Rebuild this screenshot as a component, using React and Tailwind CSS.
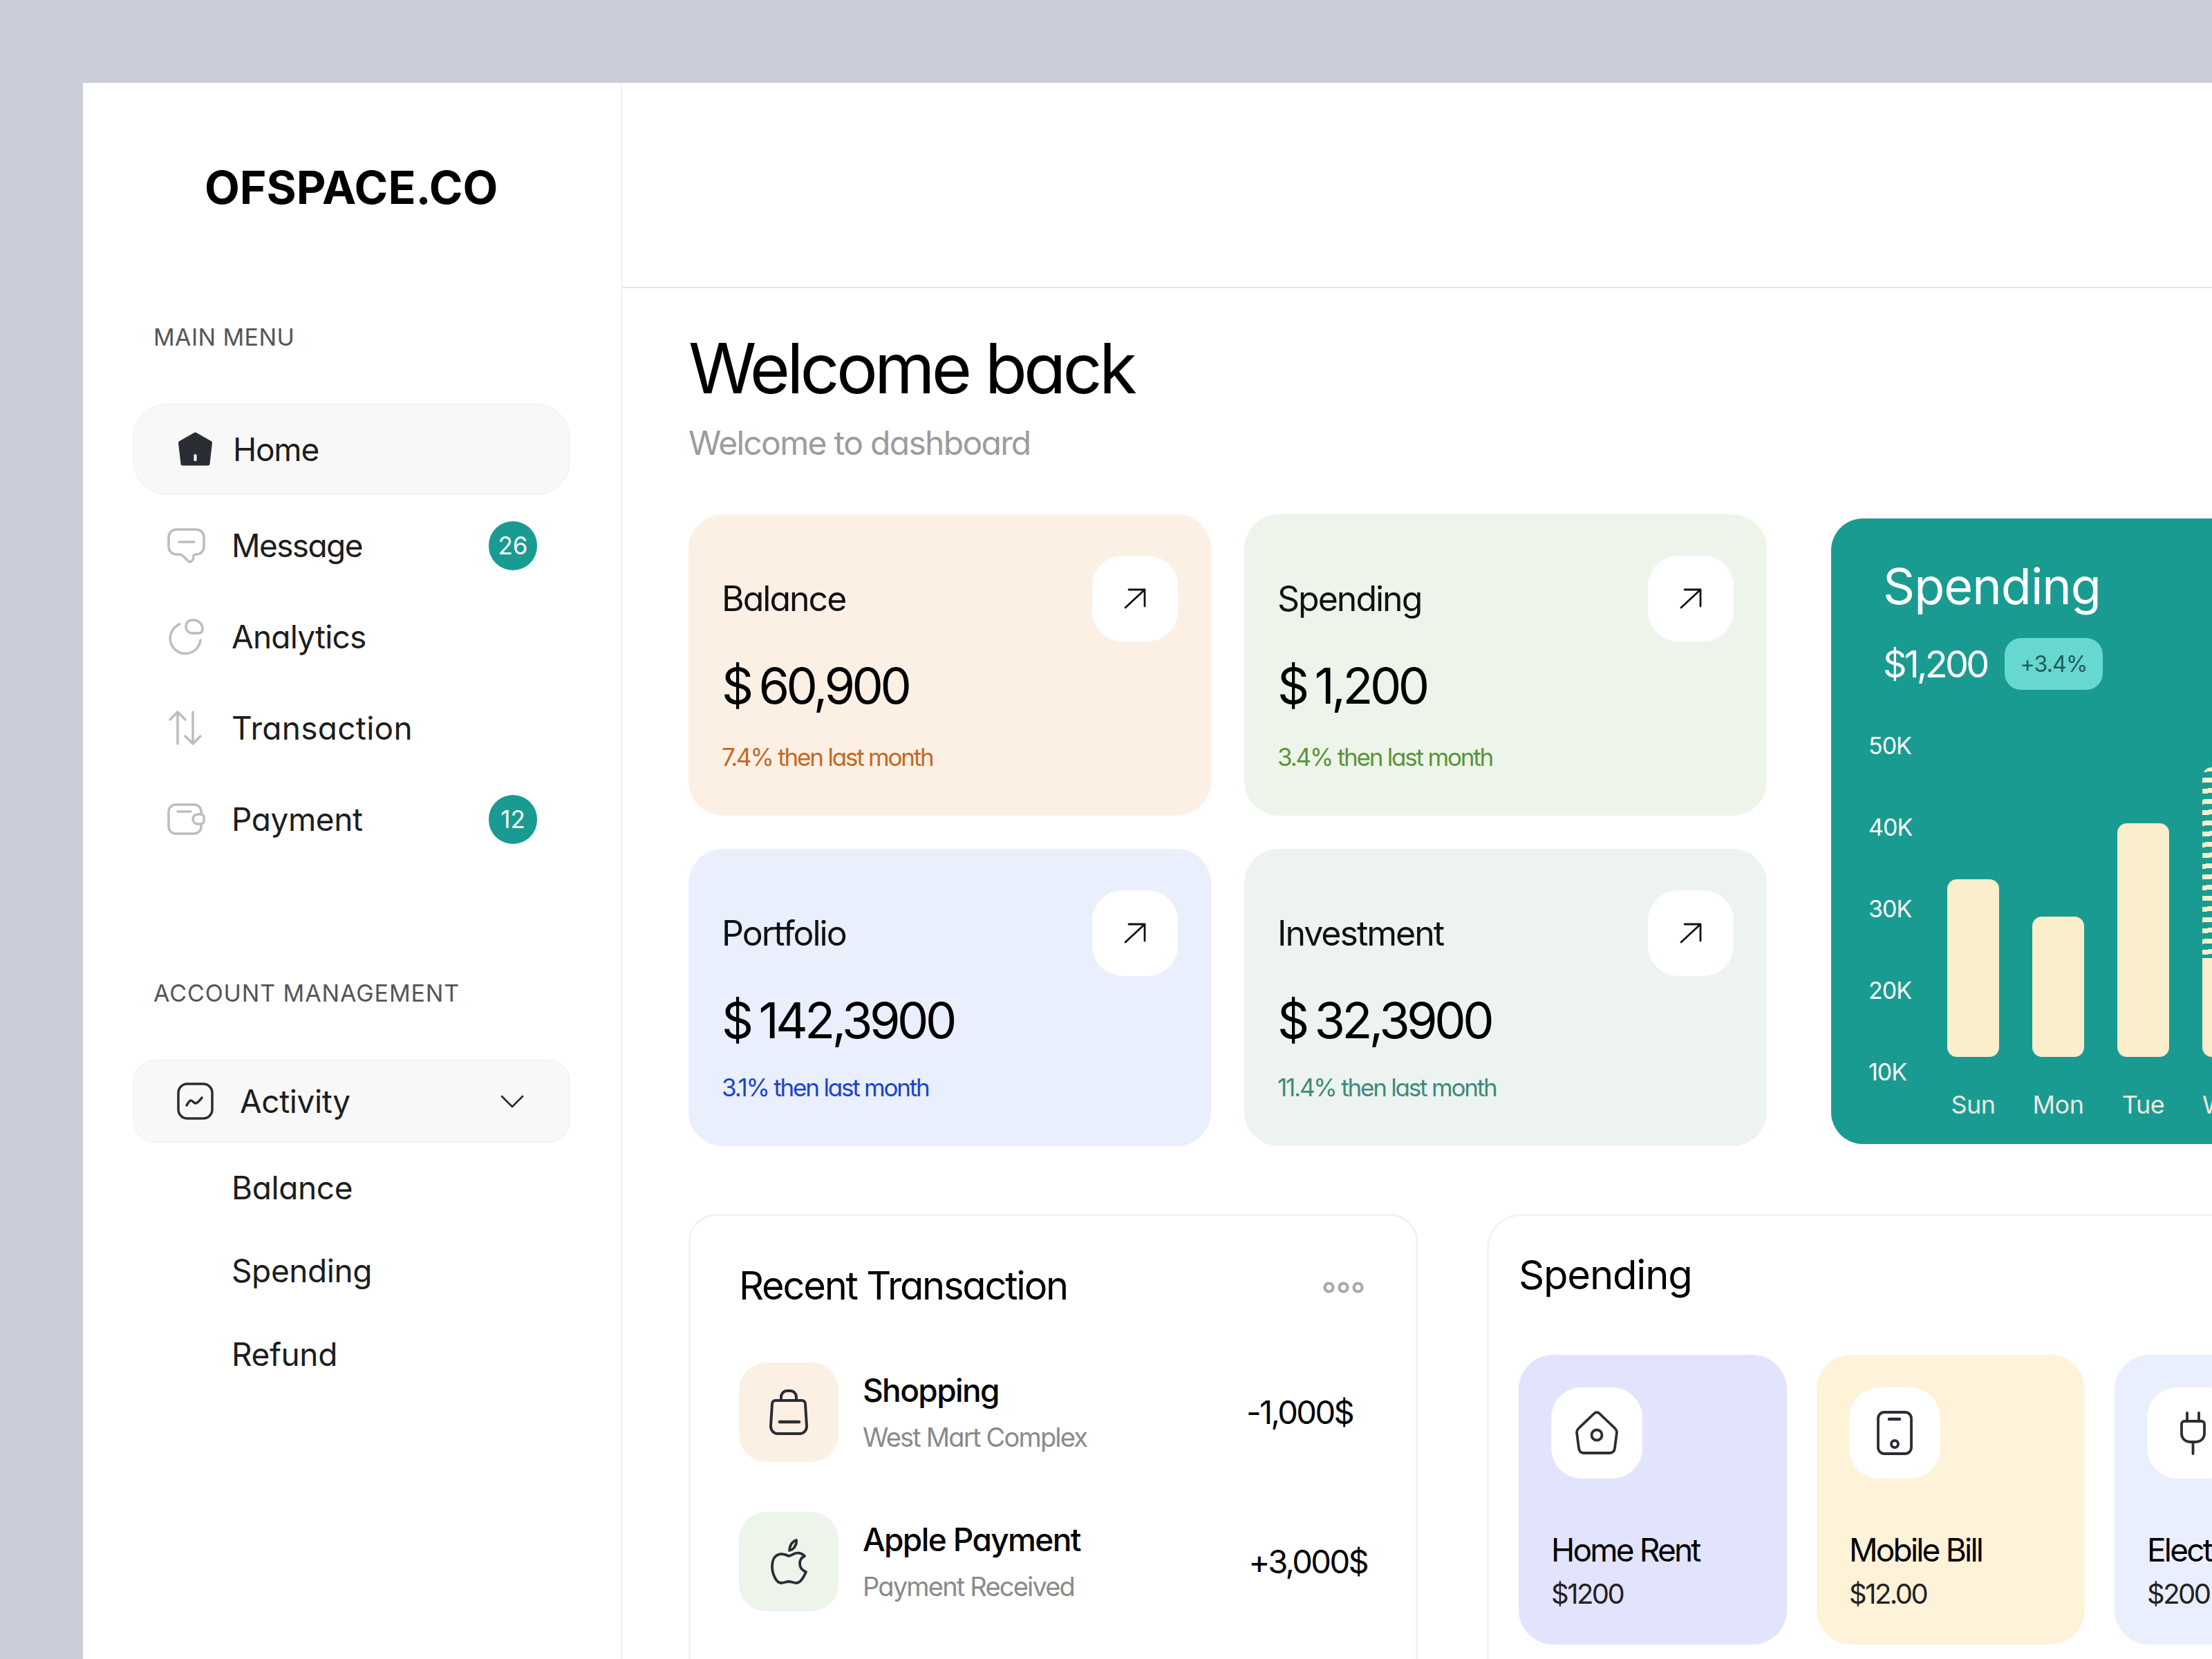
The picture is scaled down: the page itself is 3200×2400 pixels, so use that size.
const MUTED = '#bdbdbd';
const DARK = '#2a2d34';

function HomeIcon() {
  return (
    <svg width="51" height="50" viewBox="0 0 51 50" className="shrink-0">
      <path d="M25.500 3 47.500 15.500 44 46H7L3.500 15.500z" fill={DARK} stroke={DARK} strokeWidth="5" strokeLinejoin="round" />
      <rect x="23.500" y="32" width="4" height="10" rx="1.500" fill="#fff" />
    </svg>
  );
}

function MessageIcon() {
  return (
    <svg width="55" height="51" viewBox="0 0 55 51" fill="none" stroke={MUTED} strokeWidth="3.500" strokeLinecap="round" strokeLinejoin="round">
      <path d="M13 2h29a11 11 0 0 1 11 11v14a11 11 0 0 1-11 11h-1c-2 0-3 1-3 3 0 5-3 8-6 8-3-1-7-8-11-10-1-.7-2-1-4-1h-4A11 11 0 0 1 2 27V13A11 11 0 0 1 13 2z" />
      <path d="M17 20h22" />
    </svg>
  );
}

function AnalyticsIcon() {
  return (
    <svg width="53" height="53" viewBox="0 0 53 53" fill="none" stroke={MUTED} strokeWidth="3.500" strokeLinecap="round" strokeLinejoin="round">
      <path d="M18 8A22 22 0 1 0 48 31" />
      <path d="M27 11a9 9 0 0 1 9-9h2a13 13 0 0 1 13 13c0 4-2 6-6 6h-9a9 9 0 0 1-9-9z" />
    </svg>
  );
}

function TransferIcon() {
  return (
    <svg width="50" height="50" viewBox="0 0 50 50" fill="none" stroke={MUTED} strokeWidth="3.500" strokeLinecap="round" strokeLinejoin="round">
      <path d="M15 48V2M4 13 15 2l11 11" />
      <path d="M37 2v46M26 37l11 11 11-11" />
    </svg>
  );
}

function WalletIcon() {
  return (
    <svg width="55" height="46" viewBox="0 0 55 46" fill="none" stroke={MUTED} strokeWidth="3.500" strokeLinecap="round" strokeLinejoin="round">
      <path d="M49 16V12A10 10 0 0 0 39 2H12A10 10 0 0 0 2 12v22a10 10 0 0 0 10 10h27a10 10 0 0 0 10-10v-4" />
      <path d="M44 16h5a4 4 0 0 1 4 4v6a4 4 0 0 1-4 4h-5a7 7 0 0 1 0-14z" />
      <path d="M15 12h19" />
    </svg>
  );
}

function ActivityIcon() {
  return (
    <svg width="53" height="54" viewBox="0 0 53 54" fill="none" stroke={DARK} strokeWidth="3.500" strokeLinecap="round" strokeLinejoin="round" className="shrink-0">
      <rect x="2" y="2" width="49" height="50" rx="13" />
      <path d="M14 33c2-3 4-7 6-7 3 0 4 4 7 4 3 0 6-4 9-8" />
    </svg>
  );
}

function Chevron() {
  return (
    <svg width="34" height="19" viewBox="0 0 34 19" fill="none" stroke={DARK} strokeWidth="2.800" strokeLinecap="round" strokeLinejoin="round">
      <path d="M2 2 17 17 32 2" />
    </svg>
  );
}

function ArrowUpRight() {
  return (
    <svg width="32" height="30" viewBox="0 0 32 30" fill="none" stroke="#111" strokeWidth="2.800" strokeLinecap="round" strokeLinejoin="round">
      <path d="M2 28 30 2M7 2h23v24" />
    </svg>
  );
}

function BagIcon() {
  return (
    <svg width="56" height="66" viewBox="0 0 56 66" fill="none" stroke={DARK} strokeWidth="4" strokeLinecap="round" strokeLinejoin="round">
      <path d="M9 16h38c3 0 5 2 5 5l2 32c0 6-4 11-10 11H12C6 64 2 59 2 53l2-32c0-3 2-5 5-5z" />
      <path d="M17 16V11a9 9 0 0 1 9-9h4a9 9 0 0 1 9 9v5" />
      <path d="M15 47h28" strokeWidth="4.500" />
    </svg>
  );
}

function AppleIcon() {
  return (
    <svg width="53" height="66" viewBox="0 0 53 66" fill="none" stroke={DARK} strokeWidth="3.800" strokeLinecap="round" strokeLinejoin="round">
      <path d="M37 2c-6 2-10 8-10 15 6-1 11-8 10-15z" />
      <path d="M26 25c-4-2-10-4-15-2C5 25 2 32 2 40c0 11 6 24 13 24 4 0 7-2 11-2s7 2 11 2c6 0 11-9 14-16-5-2-9-6-9-12 0-5 3-9 7-11-4-4-9-5-13-4-4 1-7 4-10 4z" />
    </svg>
  );
}

function PentagonIcon() {
  return (
    <svg width="64" height="64" viewBox="0 0 64 64" fill="none" stroke={DARK} strokeWidth="3.800" strokeLinecap="round" strokeLinejoin="round">
      <path d="M28 4a5.500 5.500 0 0 1 8 0l22 21c1.500 1.500 3 3.500 3 6L58 54c-.5 4-3 7-7 7H13c-4 0-6.500-3-7-7L3 31c0-2.500 1.500-4.500 3-6z" />
      <circle cx="32" cy="35" r="7.500" />
    </svg>
  );
}

function PhoneIcon() {
  return (
    <svg width="52" height="64" viewBox="0 0 52 64" fill="none" stroke={DARK} strokeWidth="3.800" strokeLinecap="round" strokeLinejoin="round">
      <rect x="2" y="2" width="48" height="60" rx="9" />
      <path d="M18 12h15" strokeWidth="4.500" />
      <circle cx="26" cy="48" r="5" />
    </svg>
  );
}

function PlugIcon() {
  return (
    <svg width="37" height="63" viewBox="0 0 37 63" fill="none" stroke={DARK} strokeWidth="3.800" strokeLinecap="round" strokeLinejoin="round">
      <path d="M10 2v12M27 2v12" />
      <path d="M6 14h25a4 4 0 0 1 4 4v14a12 12 0 0 1-12 12h-9A12 12 0 0 1 2 32V18a4 4 0 0 1 4-4z" />
      <path d="M18.500 44v17" />
    </svg>
  );
}

function NavRow({ icon, label, badge, spacing }) {
  return (
    <div className="flex h-[132px] items-center pl-[50px] pr-[48px]">
      <div className="flex w-[93px] shrink-0 items-center">{icon}</div>
      <span className={`text-[46px] text-[#1c1d20] ${spacing}`}>{label}</span>
      {badge && (
        <span className="ml-auto flex h-[71px] w-[70px] items-center justify-center rounded-full bg-[#1a9b91] text-[35px] text-white">
          {badge}
        </span>
      )}
    </div>
  );
}

function StatCard({ label, value, note, noteColor, bg, rowGap }) {
  return (
    <div className={`rounded-[50px] pl-[48px] pr-[48px] ${bg}`}>
      <div className="flex items-center justify-between pt-[60px]">
        <span className="text-[50px] tracking-[-2px] text-[#111]">{label}</span>
        <div className="flex h-[124px] w-[124px] items-center justify-center rounded-[44px] bg-white">
          <ArrowUpRight />
        </div>
      </div>
      <div className="mt-[19px] h-[90px] text-[72px] leading-[90px] tracking-[-4.500px] text-black [word-spacing:-4px]">{value}</div>
      <div className={`h-[50px] text-[35px] leading-[50px] tracking-[-2.200px] ${noteColor} ${rowGap}`}>{note}</div>
    </div>
  );
}

function Bar({ label, height, hatched }) {
  return (
    <div className="flex w-[75px] shrink-0 flex-col items-center">
      <div className="flex h-[510px] w-full flex-col justify-end">
        {hatched && (
          <div className="h-[276px] w-full rounded-t-[14px] bg-[repeating-linear-gradient(176deg,#faeecb_0px,#faeecb_7px,transparent_7px,transparent_15.500px)]" />
        )}
        <div className={`w-full bg-[#faeecb] ${hatched ? 'rounded-b-[14px]' : 'rounded-[14px]'} ${height}`} />
      </div>
      <span className="mt-[47px] h-[44px] whitespace-nowrap text-[36px] leading-[44px] tracking-[-0.5px] text-[#ebe9e0]">{label}</span>
    </div>
  );
}

function Transaction({ icon, bg, title, sub, amount, amountMargin }) {
  return (
    <div className="flex h-[144px] items-center">
      <div className={`flex h-[144px] w-[144px] shrink-0 items-center justify-center rounded-[40px] ${bg}`}>{icon}</div>
      <div className="ml-[35px] flex h-[144px] flex-col">
        <span className="mt-[15px] h-[50px] text-[46px] font-medium leading-[50px] tracking-[-1.600px] text-black">{title}</span>
        <span className="mt-[18px] h-[50px] text-[38px] leading-[50px] tracking-[-1.800px] text-[#8a8a8a]">{sub}</span>
      </div>
      <span className={`ml-auto text-[47px] tracking-[-2.600px] text-black ${amountMargin}`}>{amount}</span>
    </div>
  );
}

function BillCard({ icon, bg, name, value }) {
  return (
    <div className={`h-[419px] w-[388px] shrink-0 rounded-[50px] pl-[47px] pt-[47px] ${bg}`}>
      <div className="flex h-[132px] w-[132px] items-center justify-center rounded-[44px] bg-white">{icon}</div>
      <div className="mt-[73px] h-[60px] whitespace-nowrap text-[46px] leading-[60px] tracking-[-2.800px] text-black">{name}</div>
      <div className="mt-[9px] h-[50px] text-[40px] leading-[50px] tracking-[-2.500px] text-[#222]">{value}</div>
    </div>
  );
}

export default function App() {
  return (
    <div className="h-[2400px] w-[3200px] overflow-hidden bg-[#c9ced9] pl-[120px] pt-[120px] font-['Inter',sans-serif] [font-feature-settings:'cv11']">
      <div className="flex h-[2280px] w-[3080px] bg-white">
        {/* Sidebar */}
        <aside className="w-[780px] shrink-0 border-r-2 border-[#f0f0f0]">
          <div className="flex h-[302px] items-center pl-[176px]">
            <span className="text-[66px] font-bold text-black [font-feature-settings:'cv11'_0]">OFSPACE.CO</span>
          </div>
          <div className="ml-[102px] mt-[44px] h-[44px] text-[34px] leading-[44px] tracking-[0.400px] text-[#555]">MAIN MENU</div>
          <div className="ml-[72px] mt-[74px] w-[633px]">
            <div className="flex h-[132px] items-center rounded-[50px] border-2 border-[#f3f3f3] bg-[#f8f8f8] pl-[63px]">
              <div className="w-[80px] shrink-0"><HomeIcon /></div>
              <span className="text-[46px] tracking-[-1.200px] text-[#1c1d20]">Home</span>
            </div>
            <div className="mt-[7px]">
              <NavRow icon={<MessageIcon />} label="Message" badge="26" spacing="tracking-[-1.600px]" />
              <NavRow icon={<AnalyticsIcon />} label="Analytics" spacing="tracking-[-0.800px]" />
              <NavRow icon={<TransferIcon />} label="Transaction" spacing="tracking-[0.300px]" />
              <NavRow icon={<WalletIcon />} label="Payment" badge="12" spacing="tracking-[-0.400px]" />
            </div>
          </div>
          <div className="ml-[102px] mt-[164px] h-[44px] text-[34px] leading-[44px] tracking-[0.900px] text-[#555]">ACCOUNT MANAGEMENT</div>
          <div className="ml-[72px] mt-[74px] w-[633px]">
            <div className="flex h-[120px] items-center rounded-[32px] border-2 border-[#f3f3f3] bg-[#f8f8f8] pl-[62px] pr-[65px]">
              <ActivityIcon />
              <span className="ml-[38px] text-[46px] tracking-[-0.4px] text-[#1c1d20]">Activity</span>
              <span className="ml-auto"><Chevron /></span>
            </div>
            <div className="mt-[5px] pl-[143px] text-[46px] tracking-[-0.4px] text-[#1c1d20]">
              <div className="flex h-[120.500px] items-center">Balance</div>
              <div className="flex h-[120.500px] items-center">Spending</div>
              <div className="flex h-[120.500px] items-center">Refund</div>
            </div>
          </div>
        </aside>

        {/* Main */}
        <main className="min-w-0 flex-1">
          <div className="h-[297px] border-b-2 border-[#e5e5e5]" />
          <div className="pl-[96px]">
            <h1 className="mt-[56px] h-[120px] text-[100px] leading-[120px] tracking-[-4.800px] text-black">Welcome back</h1>
            <p className="mt-[18px] h-[60px] text-[48px] leading-[60px] tracking-[-1.7px] text-[#9c9c9c]">Welcome to dashboard</p>

            <div className="mt-[73px] flex w-[2400px] gap-[93px]">
              <div className="grid w-[1560px] shrink-0 grid-cols-[756px_756px] grid-rows-[436px_430px] gap-[48px]">
                <StatCard label="Balance" value="$ 60,900" note="7.4% then last month" noteColor="text-[#c26a1f]" bg="bg-[#fcf0e5]" rowGap="mt-[33px]" />
                <StatCard label="Spending" value="$ 1,200" note="3.4% then last month" noteColor="text-[#5b9437]" bg="bg-[#edf4ea]" rowGap="mt-[33px]" />
                <StatCard label="Portfolio" value="$ 142,3900" note="3.1% then last month" noteColor="text-[#1a43cc]" bg="bg-[#e9effc]" rowGap="mt-[27px]" />
                <StatCard label="Investment" value="$ 32,3900" note="11.4% then last month" noteColor="text-[#3d8a7d]" bg="bg-[#ecf3f0]" rowGap="mt-[27px]" />
              </div>

              <div className="mt-[6px] h-[905px] w-[800px] shrink-0 rounded-l-[46px] bg-[#1a9b91] pl-[54px] pt-[53px]">
                <div className="ml-[21px] h-[90px] text-[72px] leading-[90px] tracking-[-1px] text-white">Spending</div>
                <div className="ml-[21px] mt-[30px] flex h-[75px] items-center">
                  <span className="w-[176px] shrink-0 text-[54px] tracking-[-3.800px] text-white">$1,200</span>
                  <span className="flex h-[75px] w-[142px] items-center justify-center rounded-[24px] bg-[#66d8cf] text-[32px] tracking-[-0.8px] text-[#1f5c5c]">+3.4%</span>
                </div>
                <div className="mt-[21px] flex">
                  <div className="w-[114px] shrink-0">
                    {['50K', '40K', '30K', '20K', '10K'].map((tick) => (
                      <div key={tick} className="flex h-[118px] items-center text-[34px] tracking-[-1px] text-white">{tick}</div>
                    ))}
                  </div>
                  <div className="flex gap-[48px]">
                    <Bar label="Sun" height="h-[257px]" />
                    <Bar label="Mon" height="h-[203px]" />
                    <Bar label="Tue" height="h-[338px]" />
                    <Bar label="Wed" height="h-[143px]" hatched />
                  </div>
                </div>
              </div>
            </div>

            <div className="mt-[98px] flex w-[2500px] gap-[100px]">
              <section className="h-[800px] w-[1055px] shrink-0 rounded-[40px] border-[3px] border-[#f2f2f2] pl-[70px] pt-[66px]">
                <div className="flex h-[70px] items-center justify-between pr-[75px]">
                  <span className="text-[56px] tracking-[-2.200px] text-black">Recent Transaction</span>
                  <svg width="59" height="17" viewBox="0 0 59 17" fill="none" stroke="#a8a8a8" strokeWidth="4.200" className="mt-[4px]">
                    <circle cx="8.500" cy="8.500" r="6" />
                    <circle cx="29.500" cy="8.500" r="6" />
                    <circle cx="50.500" cy="8.500" r="6" />
                  </svg>
                </div>
                <div className="mt-[76px] flex flex-col gap-[72px]">
                  <Transaction icon={<BagIcon />} bg="bg-[#fcf0e5]" title="Shopping" sub="West Mart Complex" amount="-1,000$" amountMargin="mr-[91px]" />
                  <Transaction icon={<AppleIcon />} bg="bg-[#edf4ea]" title="Apple Payment" sub="Payment Received" amount="+3,000$" amountMargin="mr-[70px]" />
                </div>
              </section>

              <section className="h-[800px] w-[1400px] shrink-0 rounded-[50px] border-[3px] border-[#f2f2f2] pl-[43px] pt-[50px]">
                <div className="h-[70px] text-[58px] leading-[70px] tracking-[-1.200px] text-black">Spending</div>
                <div className="mt-[81px] flex gap-[43px]">
                  <BillCard icon={<PentagonIcon />} bg="bg-[#e2e3fc]" name="Home Rent" value="$1200" />
                  <BillCard icon={<PhoneIcon />} bg="bg-[#fef2d8]" name="Mobile Bill" value="$12.00" />
                  <BillCard icon={<PlugIcon />} bg="bg-[#e9effc]" name="Electricity" value="$200" />
                </div>
              </section>
            </div>
          </div>
        </main>
      </div>
    </div>
  );
}
